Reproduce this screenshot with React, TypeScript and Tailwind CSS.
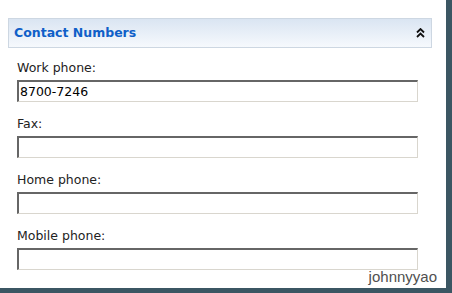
const fields = [
  { label: "Work phone:", value: "8700-7246" },
  { label: "Fax:", value: "" },
  { label: "Home phone:", value: "" },
  { label: "Mobile phone:", value: "" },
];

const DoubleChevronUp = () => (
  <svg width="9" height="10" viewBox="0 0 9 10" fill="none">
    <path d="M1 4.5 L4.5 1 L8 4.5" stroke="#111" strokeWidth="1.8" />
    <path d="M1 9 L4.5 5.5 L8 9" stroke="#111" strokeWidth="1.8" />
  </svg>
);

const App = () => {
  return (
    <div className="relative w-[452px] h-[293px] bg-white border-r-[6px] border-b-[5px] border-[#3b5663] pt-[18px] pl-[8px] pr-[14px] font-['DejaVu_Sans',sans-serif]">
      <div className="h-[30px] flex items-center justify-between border border-[#cdd7e2] bg-gradient-to-b from-[#dae5f2] to-[#f6f9fd] pl-[5px] pr-[6px]">
        <span className="text-[12.5px] font-bold text-[#0f5fc8] leading-none">
          Contact Numbers
        </span>
        <DoubleChevronUp />
      </div>

      <div className="pl-[9px] pr-[14px] pt-[12px] flex flex-col gap-[14px]">
        {fields.map((f) => (
          <div key={f.label} className="flex flex-col">
            <label className="text-[12.5px] leading-[16px] text-[#222] mb-[4px]">
              {f.label}
            </label>
            <input
              type="text"
              readOnly
              value={f.value}
              className="h-[22px] w-full bg-white text-[12.5px] text-black pl-[1px] outline-none border-t-2 border-l-2 border-r border-b border-t-[#666] border-l-[#666] border-r-[#d9d6ce] border-b-[#d9d6ce] font-['DejaVu_Sans',sans-serif]"
            />
          </div>
        ))}
      </div>

      <span className="absolute right-[9px] bottom-[2px] text-[15px] leading-[18px] text-[#505050] font-['Liberation_Sans',sans-serif]">
        johnnyyao
      </span>
    </div>
  );
};

export default App;
